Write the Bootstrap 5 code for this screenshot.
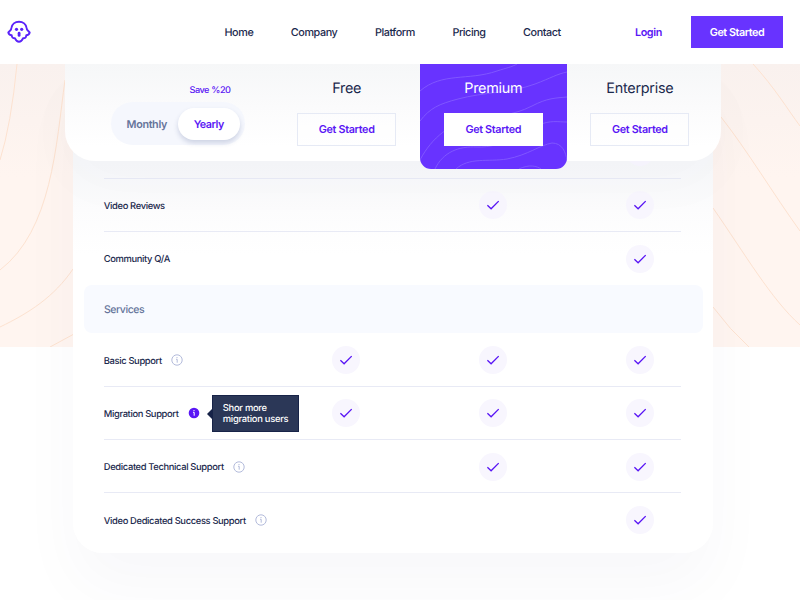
<!DOCTYPE html>
<html lang="en">
<head>
<meta charset="utf-8">
<meta name="viewport" content="width=device-width, initial-scale=1">
<title>Pricing</title>
<link href="https://cdn.jsdelivr.net/npm/bootstrap@5.3.0/dist/css/bootstrap.min.css" rel="stylesheet">
<style>
:root{--violet:#6833ff;--vivid:#5a17f5;--ink:#1b294d;--line:#e8eaf5}
body{font-family:Inter,"Liberation Sans",sans-serif;color:var(--ink);background:#fff;height:600px;overflow:hidden;font-size:9.4px;line-height:1.2;text-rendering:geometricPrecision}
.topbar{height:64px;z-index:5;padding:0 17px 0 7px;background:#fff}
.menu{margin-left:193.5px;gap:37.5px}
.menu a{color:var(--ink);text-decoration:none;font-size:10.8px;font-weight:500;letter-spacing:-.42px;white-space:nowrap;padding-top:2px}
.account{gap:29px}
.menu a.login{color:var(--vivid);font-weight:600;letter-spacing:-.35px}
.cta{--bs-btn-border-radius:0;border-radius:0;font-weight:600;font-size:10.8px;letter-spacing:-.33px;padding:1px 0 0;line-height:1;white-space:nowrap}
.menu a.cta-nav{width:92px;height:32px;background:var(--violet);color:#fff;border:0;font-weight:600;letter-spacing:-.45px}
.cta-plan,.cta-plan:hover{width:99px;height:33px;margin-top:16px;background:rgba(255,255,255,.35);border:1px solid #e6eaf5;color:var(--vivid)}
.premium .cta-plan{background:#fff;border-color:#fff}
.backdrop{z-index:0;top:0;left:0}
.plans{z-index:3;width:656px;height:97px;margin-left:65px;border-radius:0 0 30px 30px;background:linear-gradient(#f6f7f8,#fbfbfc 45%,#fff 85%);box-shadow:0 24px 60px rgba(30,40,90,.02)}
.switch-col{width:208.4px;padding:20px 0 0 45.5px}
.save{color:var(--vivid);font-size:9.2px;font-weight:500;letter-spacing:-.5px;word-spacing:.3px;line-height:13px;padding-left:79px;white-space:nowrap}
.switcher{width:134px;height:43px;margin-top:5px;padding:5px;border-radius:22px;background:#f5f7fd;font-size:10.8px;letter-spacing:-.35px;color:#65749a;font-weight:600}
.switcher .off{width:63px;text-align:center;padding-top:3px}
.switcher .on{width:62px;height:32px;border-radius:16px;background:#fff;color:var(--vivid);box-shadow:0 3px 5px rgba(50,70,130,.2);letter-spacing:-.5px;padding-top:3px}
.plan{width:146.6px;padding-top:16px}
.plan-name{font-size:14.4px;line-height:18px;letter-spacing:-.26px}
.plan .cta-plan{margin-top:15px}
.premium{position:relative;height:105.3px;background:var(--violet);color:#fff;border-radius:0 0 11px 11px;overflow:hidden}
.premium>svg{position:absolute;inset:0}
.premium>div,.premium>a{position:relative}
.features{z-index:2;width:640px;height:489px;margin:-97px 0 0 73.4px;padding-top:61.2px;border-radius:0 0 30px 30px;background:linear-gradient(#f5f6f8 0,#f6f7f9 100px,#fcfcfd 145px,#fff 190px);box-shadow:0 35px 65px rgba(30,40,100,.03)}
.feature{position:relative;height:53.35px;padding-left:30.4px}
.feature.ruled::after{content:"";position:absolute;left:30.4px;right:32px;bottom:0;height:1px;background:var(--line)}
.feature-label{width:169px;font-weight:500;letter-spacing:-.36px;white-space:nowrap}
.feature-label span{padding-top:2.6px}
.feature-label svg{margin-left:9px}
.cell{width:146.7px}
.tick{width:28px;height:28px;border-radius:50%;background:#f8f6fe}
.section-band{height:48px;margin:0 10.5px 0 10.2px;padding:2px 0 0 20.3px;border-radius:8px;background:#f8faff;color:#65749a;font-size:10.5px;font-weight:500;letter-spacing:-.42px}
.hint{position:absolute;left:138.4px;top:8px;width:87px;height:37.5px;background:#2b3757;border:1px solid #172348;color:#fff;font-size:9.4px;line-height:11px;padding:7px 0 0 10px;font-weight:500;letter-spacing:-.27px;white-space:nowrap;z-index:2}
.hint::before{content:"";position:absolute;left:-6px;top:13px;border:5px solid transparent;border-left:0;border-right-color:#172348}
</style>
<script src="https://cdn.jsdelivr.net/npm/bootstrap@5.3.0/dist/js/bootstrap.bundle.min.js"></script>
</head>
<body>
<svg width="0" height="0" class="position-absolute">
  <symbol id="check" viewBox="0 0 28 28"><path d="M8.400 14.300l3.700 3.500 7.600-7.700" fill="none" stroke="#5a17f5" stroke-width="1.350"/></symbol>
  <symbol id="info" viewBox="0 0 12 12"><circle cx="6" cy="6" r="5.200" fill="none" stroke="#b3bbdb"/><path d="M5 5.300h1.200v3.400M6 3v1.100" fill="none" stroke="#b3bbdb"/></symbol>
  <symbol id="info-on" viewBox="0 0 12 12"><circle cx="6" cy="6" r="5.300" fill="#5a17f5"/><path d="M5 5.300h1.200v3.400M6 3v1.100" fill="none" stroke="#fff"/></symbol>
</svg>

<nav class="topbar position-relative d-flex align-items-center">
  <svg width="24" height="24" viewBox="0 0 24 24" fill="none" stroke="#5a22fa" stroke-width="1.900" stroke-linejoin="round">
    <path d="M12 1.800c4.100 0 7 2.700 7.600 6.100l.4 1.700 2.700 2.900c-.4 1.800-1.600 2.700-3.400 2.700-.1 2.100-1.200 3.200-3.300 3.100-1 2.200-2.200 3.400-4 3.400s-3-1.200-4-3.400c-2.100.1-3.200-1-3.300-3.100-1.800 0-3-.9-3.400-2.700L4 9.600l.4-1.700C5 4.500 7.900 1.800 12 1.800z"/>
    <circle cx="9.500" cy="9.300" r="1.600" fill="#5a22fa" stroke="none"/><circle cx="14.700" cy="9.300" r="1.600" fill="#5a22fa" stroke="none"/>
    <rect x="10.700" y="11.800" width="2.800" height="5" rx="1.400" fill="#5a22fa" stroke="none"/>
  </svg>
  <div class="menu d-flex">
    <a href="#">Home</a><a href="#">Company</a><a href="#">Platform</a><a href="#">Pricing</a><a href="#">Contact</a>
  </div>
  <div class="menu account d-flex align-items-center ms-auto">
    <a class="login" href="#">Login</a>
    <a class="btn cta cta-nav d-flex align-items-center justify-content-center" href="#">Get Started</a>
  </div>
</nav>

<main class="position-relative">
  <svg class="backdrop position-absolute" width="800" height="283" viewBox="0 64 800 283">
    <defs><linearGradient id="peach" x2="0" y2="1"><stop stop-color="#f9f1ee"/><stop offset=".4" stop-color="#fff5f0"/><stop offset="1" stop-color="#fff5f0"/></linearGradient></defs>
    <rect y="64" width="800" height="283" fill="url(#peach)"/>
    <g fill="none" stroke="#fde2d0">
      <path d="M17 64Q11 125 0 160M65 80C56 145 52 230 0 270M73 269C54 297 29 313 0 327M50 347L74 334"/>
      <path d="M753 64C775 88 788 110 800 126M721 117C747 150 774 195 800 231M713 208C745 254 771 299 800 325M713 307Q730 330 749 347"/>
    </g>
  </svg>

  <header class="plans position-relative d-flex align-items-start">
    <div class="switch-col">
      <div class="save">Save %20</div>
      <div class="switcher d-flex align-items-center">
        <div class="off">Monthly</div>
        <div class="on d-flex align-items-center justify-content-center">Yearly</div>
      </div>
    </div>
    <section class="plan d-flex flex-column align-items-center">
      <div class="plan-name">Free</div>
      <a class="btn cta cta-plan d-flex align-items-center justify-content-center" href="#">Get Started</a>
    </section>
    <section class="plan premium d-flex flex-column align-items-center">
      <svg width="147" height="105" viewBox="0 0 147 105" fill="none" stroke="#8760ff" stroke-width=".8">
        <path d="M0 27C22 8 48 17 77 7C86 4 92 3 97 0M0 57C10 44 19 40 38 35C64 28 91 29 115 20C131 14 137 10 147 8M0 96C12 73 31 59 53 55C79 51 92 52 112 42C127 34 136 34 147 33M15 105C23 88 39 82 57 83C82 84 106 68 119 61C130 56 138 58 147 58M36 105C49 93 68 98 87 95C108 91 120 81 132 79C142 79 146 88 147 97M99 105C109 100 117 102 121 105"/>
      </svg>
      <div class="plan-name">Premium</div>
      <a class="btn cta cta-plan d-flex align-items-center justify-content-center" href="#">Get Started</a>
    </section>
    <section class="plan d-flex flex-column align-items-center">
      <div class="plan-name">Enterprise</div>
      <a class="btn cta cta-plan d-flex align-items-center justify-content-center" href="#">Get Started</a>
    </section>
  </header>

  <section class="features position-relative">
    <div class="feature ruled d-flex align-items-center">
      <div class="feature-label"></div><div class="cell"></div><div class="cell"></div>
      <div class="cell d-flex justify-content-center"><div class="tick"></div></div>
    </div>
    <div class="feature ruled d-flex align-items-center">
      <div class="feature-label d-flex"><span>Video Reviews</span></div><div class="cell"></div>
      <div class="cell d-flex justify-content-center"><svg class="tick"><use href="#check"/></svg></div>
      <div class="cell d-flex justify-content-center"><svg class="tick"><use href="#check"/></svg></div>
    </div>
    <div class="feature d-flex align-items-center">
      <div class="feature-label d-flex"><span>Community Q/A</span></div><div class="cell"></div><div class="cell"></div>
      <div class="cell d-flex justify-content-center"><svg class="tick"><use href="#check"/></svg></div>
    </div>
    <div class="section-band d-flex align-items-center">Services</div>
    <div class="feature ruled d-flex align-items-center">
      <div class="feature-label d-flex align-items-center"><span>Basic Support</span><svg width="12" height="12"><use href="#info"/></svg></div>
      <div class="cell d-flex justify-content-center"><svg class="tick"><use href="#check"/></svg></div>
      <div class="cell d-flex justify-content-center"><svg class="tick"><use href="#check"/></svg></div>
      <div class="cell d-flex justify-content-center"><svg class="tick"><use href="#check"/></svg></div>
    </div>
    <div class="feature ruled d-flex align-items-center">
      <div class="feature-label d-flex align-items-center"><span>Migration Support</span><svg width="12" height="12"><use href="#info-on"/></svg></div>
      <div class="hint">Shor more<br>migration users</div>
      <div class="cell d-flex justify-content-center"><svg class="tick"><use href="#check"/></svg></div>
      <div class="cell d-flex justify-content-center"><svg class="tick"><use href="#check"/></svg></div>
      <div class="cell d-flex justify-content-center"><svg class="tick"><use href="#check"/></svg></div>
    </div>
    <div class="feature ruled d-flex align-items-center">
      <div class="feature-label d-flex align-items-center"><span>Dedicated Technical Support</span><svg width="12" height="12"><use href="#info"/></svg></div>
      <div class="cell"></div>
      <div class="cell d-flex justify-content-center"><svg class="tick"><use href="#check"/></svg></div>
      <div class="cell d-flex justify-content-center"><svg class="tick"><use href="#check"/></svg></div>
    </div>
    <div class="feature d-flex align-items-center">
      <div class="feature-label d-flex align-items-center"><span>Video Dedicated Success Support</span><svg width="12" height="12"><use href="#info"/></svg></div>
      <div class="cell"></div><div class="cell"></div>
      <div class="cell d-flex justify-content-center"><svg class="tick"><use href="#check"/></svg></div>
    </div>
  </section>
</main>
</body>
</html>
